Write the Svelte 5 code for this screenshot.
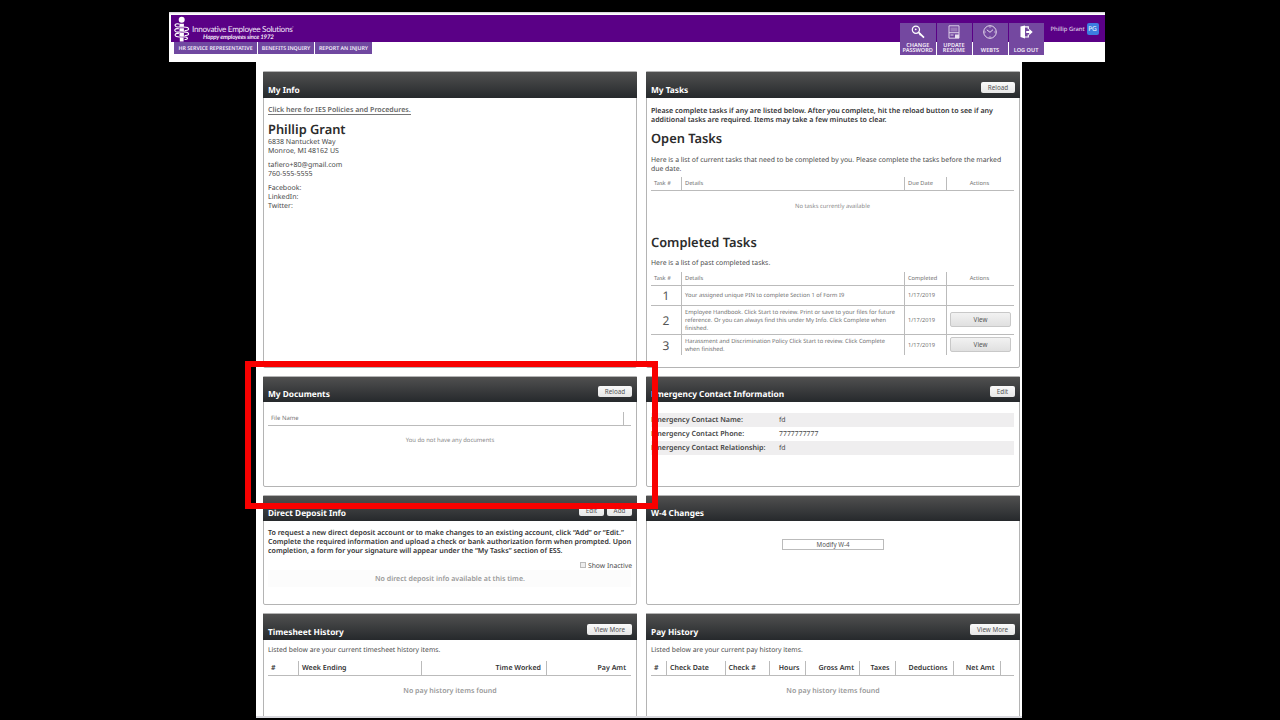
<script>
  const payColumns = ['#', 'Check Date', 'Check #', 'Hours', 'Gross Amt', 'Taxes', 'Deductions', 'Net Amt', ''];
  const nav = ['HR SERVICE REPRESENTATIVE', 'BENEFITS INQUIRY', 'REPORT AN INJURY'];
  const completed = [
    { id: 1, lines: ['Your assigned unique PIN to complete Section 1 of Form I9'], view: false },
    { id: 2, lines: ['Employee Handbook. Click Start to review. Print or save to your files for future', 'reference. Or you can always find this under My Info. Click Complete when', 'finished.'], view: true },
    { id: 3, lines: ['Harassment and Discrimination Policy Click Start to review. Click Complete', 'when finished.'], view: true }
  ];
  const contact = [
    ['Emergency Contact Name:', 'fd'],
    ['Emergency Contact Phone:', '7777777777'],
    ['Emergency Contact Relationship:', 'fd']
  ];
</script>

<div class="screen">
  <header>
    <div class="bar">
      <svg class="logo" viewBox="0 0 18 26" width="18" height="26" fill="none" stroke="#fff">
        <circle cx="8.700" cy="3.700" r="3" fill="#fff" stroke="none" />
        <path d="M6.500 7.700h4.400v3H6.500zM6.500 12.300h4.400v3H6.500zM6.500 17h4.400v3H6.500zM6.800 21.500h3.800v4H6.800z" fill="#fff" stroke="none" />
        <path d="M6 8C2.500 7 .8 9.300 3 10.500C6 12 11 10 14.500 11.500C17 13 15 14.800 12 14.500M5.500 12.800C2 12 .5 14.500 3 15.700C6.500 17 11 14.800 14.500 16.500C17 18 15 19.800 12 19.500M5.500 17.500C2 17 1 19.500 3.500 20.500C6.500 21.800 10 19.800 13.500 21.300C15.500 22.500 14 23.800 12 23.500" stroke-width="1.100" stroke-linecap="round" />
      </svg>
      <div class="brand">
        <div class="name">Innovative Employee Solutions<sup>’</sup></div>
        <div class="motto">Happy employees since 1972</div>
      </div>
      <div class="tiles">
        <div class="tile">
          <svg viewBox="0 0 14 14" width="14" height="14" fill="none" stroke="#fff"><circle cx="4.900" cy="4.700" r="3.600" stroke-width="1.200" /><circle cx="4.700" cy="4.300" r=".9" fill="#fff" stroke="none" /><path d="M7.600 7.400L13 12.600M8.500 10l1.600-1.400" stroke-width="1.700" /></svg>
          <span>CHANGE<br />PASSWORD</span>
        </div>
        <div class="tile">
          <svg viewBox="0 0 14 14" width="14" height="14" fill="none" stroke="#ddd0e8"><path d="M2 .8h10v12.400H2z" stroke-width="1" /><path d="M3.500 2.500h7v4h-7z" fill="#9a78b8" stroke="none" /><path d="M2 7.700h10M3.500 10h3" stroke-width="1" /><path d="M8 9.500h4v3.500H8z" fill="#e9dff0" stroke="none" /></svg>
          <span>UPDATE<br />RESUME</span>
        </div>
        <div class="tile">
          <svg viewBox="0 0 14 14" width="14" height="14" fill="none" stroke="#e6dced"><circle cx="7" cy="7" r="6.300" stroke-width="1" /><path d="M3.800 4.800L7 7.300l3-2.600" stroke-width="1" /><path d="M7 1.300v1.500M7 11.200v1.500M1.300 7h1.500M11.200 7h1.500" stroke-width=".8" /></svg>
          <span>WEBTS</span>
        </div>
        <div class="tile">
          <svg viewBox="0 0 14 14" width="14" height="14" fill="none" stroke="#fff"><path d="M1.500 1.500L6 .5v13L1.500 12z" fill="#fff" stroke="none" /><path d="M6 1.800h3.300v2.500M6 12h3.300V9.500" stroke-width="1.200" /><path d="M7.200 5.900h3V3.700L13.700 7l-3.500 3.300V8.100h-3z" fill="#fff" stroke="none" /></svg>
          <span>LOG OUT</span>
        </div>
      </div>
      <div class="user">Phillip Grant</div>
      <div class="avatar">PG</div>
    </div>
    <nav>{#each nav as item, i}<div class="n{i}"><span>{item}</span></div>{/each}</nav>
  </header>

  <main>
    <section class="edge">
      <div class="head"><h2>My Info</h2></div>
      <div class="body info">
        <p class="link"><span>Click here for IES Policies and Procedures.</span></p>
        <h3 class="person">Phillip Grant</h3>
        <p class="t">6838 Nantucket Way<br />Monroe, MI 48162 US</p>
        <p class="t gap">tafiero+80@gmail.com<br />760-555-5555</p>
        <p class="t gap">Facebook:<br />LinkedIn:<br />Twitter:</p>
      </div>
    </section>

    <section class="edge">
      <div class="head"><h2>My Tasks</h2><button>Reload</button></div>
      <div class="body">
        <p class="b top">Please complete tasks if any are listed below. After you complete, hit the reload button to see if any<br />additional tasks are required. Items may take a few minutes to clear.</p>
        <h3 class="open">Open Tasks</h3>
        <p class="t long">Here is a list of current tasks that need to be completed by you. Please complete the tasks before the marked<br />due date.</p>
        <div class="tasks first">
          <div class="row th"><div>Task #</div><div>Details</div><div>Due Date</div><div class="act">Actions</div></div>
        </div>
        <p class="none tasknone">No tasks currently available</p>
        <h3 class="done">Completed Tasks</h3>
        <p class="t long">Here is a list of past completed tasks.</p>
        <div class="tasks second">
          <div class="row th"><div>Task #</div><div>Details</div><div>Completed</div><div class="act">Actions</div></div>
          {#each completed as task}
            <div class="row r{task.id}">
              <div class="num">{task.id}</div>
              <div class="det"><span>{#each task.lines as line, i}{#if i}<br />{/if}{line}{/each}</span></div>
              <div>1/17/2019</div>
              <div class="act">{#if task.view}<button class="view">View</button>{/if}</div>
            </div>
          {/each}
        </div>
      </div>
    </section>

    <section>
      <div class="head"><h2>My Documents</h2><button>Reload</button></div>
      <div class="body">
        <div class="files"><div>File Name</div><div></div></div>
        <p class="none docnone">You do not have any documents</p>
      </div>
    </section>

    <section>
      <div class="head"><h2>Emergency Contact Information</h2><button class="small">Edit</button></div>
      <div class="body contact">
        {#each contact as [label, value]}<div class="pair"><b>{label}</b><span>{value}</span></div>{/each}
      </div>
    </section>

    <section>
      <div class="head"><h2>Direct Deposit Info</h2><button class="small">Edit</button><button class="small">Add</button></div>
      <div class="body">
        <p class="b deposit">To request a new direct deposit account or to make changes to an existing account, click “Add” or “Edit.”<br />Complete the required information and upload a check or bank authorization form when prompted. Upon<br />completion, a form for your signature will appear under the “My Tasks” section of ESS.</p>
        <div class="inactive"><i></i><span>Show Inactive</span></div>
        <p class="missing nodeposit">No direct deposit info available at this time.</p>
      </div>
    </section>

    <section>
      <div class="head"><h2>W-4 Changes</h2></div>
      <div class="body"><button class="modify">Modify W-4</button></div>
    </section>

    <section class="last edge">
      <div class="head"><h2>Timesheet History</h2><button class="more">View More</button></div>
      <div class="body hist">
        <p class="t listed">Listed below are your current timesheet history items.</p>
        <div class="times"><div>#</div><div>Week Ending</div><div class="r">Time Worked</div><div class="r">Pay Amt</div></div>
        <p class="missing">No pay history items found</p>
      </div>
    </section>

    <section class="last edge">
      <div class="head"><h2>Pay History</h2><button class="more">View More</button></div>
      <div class="body hist">
        <p class="t listed">Listed below are your current pay history items.</p>
        <div class="pays">{#each payColumns as col, i}<div class:r={i > 2}>{col}</div>{/each}</div>
        <p class="missing">No pay history items found</p>
      </div>
    </section>
  </main>
  <div class="highlight"></div>
</div>

<style>
  :global(body) { margin: 0; background: #000; }
  .screen { position: relative; width: 1280px; height: 720px; overflow: hidden; background: #000; font-family: "Noto Sans", sans-serif; font-size: 6.800px; line-height: 9px; color: #4a4a4a; text-rendering: geometricPrecision; white-space: nowrap; }
  .screen * { box-sizing: border-box; }
  p, h2, h3 { margin: 0; }
  header { display: flow-root; margin: 0 0 0 169px; width: 936px; height: 62px; padding-top: 12px; background: linear-gradient(#000 12px, #cfcbd2 12px, #fff 14px); }
  .bar { height: 27px; margin: 3px 0 0 2px; display: flex; background: #5a0086; color: #fff; }
  .logo { margin: 1px 0 0 2px; flex: none; }
  .brand { width: 130px; margin-left: 1px; }
  .name { margin-top: 10px; font: 8.200px/9px Lato, sans-serif; letter-spacing: -.33px; color: #efe5f6; }
  .name sup { font-size: 5px; line-height: 0; vertical-align: 2px; }
  .motto { margin: 0 0 0 11px; font: italic 700 6.200px/7px Lato, sans-serif; letter-spacing: -.2px; color: #efe4f5; }
  .tiles { margin: 8px 0 0 578px; display: grid; grid-template-columns: 35.500px 35px 35px 35px; gap: 1px; height: 31.500px; }
  .tile { background: #7448a0; display: flex; flex-direction: column; align-items: center; font: 600 5.600px/5.500px "Noto Sans"; color: #f4edf8; text-align: center; }
  .tile svg { margin-top: 2px; flex: none; }
  .tile span { margin-top: auto; padding-bottom: 1px; }
  .user { margin: 9.500px 0 0 7px; width: 36px; font-size: 5.900px; color: #eee3f4; }
  .avatar { margin-top: 8px; width: 12px; height: 12px; border-radius: 2px; background: #3c7de0; font-size: 6.500px; line-height: 12px; text-align: center; }
  nav { display: flex; gap: 1px; margin-left: 5px; height: 12px; }
  nav div { height: 12px; background: #7048a0; color: #f5effa; font: 600 5.300px/12.500px "Noto Sans"; text-align: center; }
  .n0 { width: 83px; } .n1 { width: 56px; } .n2 { width: 57px; }

  main { margin-left: 256px; width: 766px; height: 656px; padding: 9px 2px 0 7px; display: grid; grid-template-columns: 374px 374px; grid-template-rows: 296.500px 111px 110.500px 103px; column-gap: 9px; row-gap: 8px; background: #fff; border-bottom: 2px solid #d9d9de; }
  section { border: 1px solid #b4b4b4; border-radius: 0 0 2px 2px; background: #fff; min-width: 0; }
  section.last { border-bottom: 0; border-radius: 0; }
  .head { height: 25px; margin: 0 -1px; padding: 0 5px; background: linear-gradient(#505050, #26292c); display: flex; gap: 3px; align-items: flex-start; }
  .edge .head { height: 26px; }
  h2 { flex: 1; font-size: 8.300px; line-height: 12px; padding-top: 12px; color: #fff; }
  .edge h2 { padding-top: 13px; }
  button { font: 6.300px/9px "Noto Sans"; color: #555; background: linear-gradient(#fafafa, #e6e6e6); border: 0; border-radius: 2px; padding: 0; width: 34px; height: 11px; margin-top: 9.500px; }
  .edge button { margin-top: 10px; }
  button.small { width: 25px; }
  button.more { width: 45px; }
  .body { padding: 8px 5px 0 4px; }
  .link { font-size: 7.060px; font-weight: 600; color: #666; height: 14.500px; }
  .link span { border-bottom: 1px solid #777; display: inline-block; height: 9px; line-height: 9.600px; }
  .info { font-size: 7px; }
  .person + .t { padding-top: 1px; }
  h3 { color: #2c2c2c; font-weight: 600; font-size: 12.850px; line-height: 16px; }
  .gap { margin-top: 5px; }
  .b { font-weight: 600; font-size: 7.070px; color: #333; }
  .b.top { padding-top: 1px; }
  .deposit { font-size: 7.060px; padding-top: .8px; }
  .open { margin-top: 5px; }
  .long { font-size: 6.870px; }
  .open + .t { margin-top: 10px; }
  .tasks { color: #707070; font-size: 5.700px; }
  .first { margin-top: 3px; }
  .row { display: grid; grid-template-columns: 30px 223px 42px 68px; border-bottom: 1px solid #bbb; width: 363px; }
  .row > div { padding-left: 3px; border-left: 1px solid #bbb; display: flex; align-items: center; }
  .row > div:first-child { border: 0; }
  .row > .act { justify-content: center; padding: 0 2px 0 0; }
  .th { height: 14px; }
  .none { text-align: center; color: #888; font-size: 5.800px; }
  .tasknone { margin-top: 11px; }
  .done { margin-top: 23px; }
  .done + .t { margin-top: 9px; }
  .second { margin-top: 4px; }
  .r1 { height: 20px; } .r2 { height: 29px; } .r3 { height: 20px; border: 0; }
  .row > .num { font-size: 12px; justify-content: center; color: #555; padding: 0; }
  .row > .det { line-height: 8.300px; font-size: 5.780px; }
  .edge .act .view { margin: -1px 0 0 2px; width: 61px; height: 15px; border: 1px solid #c8c8c8; background: linear-gradient(#f2f2f2, #e0e0e0); }
  .files { margin-top: 2px; height: 14px; display: flex; border-bottom: 1px solid #bbb; color: #777; font-size: 5.900px; line-height: 13px; }
  .files div:first-child { width: 355.500px; padding-left: 3px; border-right: 1px solid #bbb; }
  .docnone { margin-top: 10px; padding-left: 1px; font-size: 5.880px; }
  .body.contact { padding-top: 11px; }
  .pair { height: 14.200px; line-height: 14.600px; display: flex; align-items: baseline; font-size: 6.900px; }
  .pair:nth-child(odd) { background: #efeeef; }
  .pair b { width: 128px; font-weight: 600; font-size: 7.120px; color: #444; line-height: 15.400px; }
  .inactive { display: flex; justify-content: flex-end; align-items: center; margin: 4px -1px 0 0; gap: 1.500px; height: 10px; }
  .inactive i { width: 6px; height: 6px; border: 1px solid #bbb; background: #eee; }
  .missing { font-weight: 600; font-size: 7.060px; color: #999; text-align: center; padding-left: 1px; }
  .nodeposit { height: 17px; line-height: 18px; background: #fcfcfc; }
  .modify { display: block; width: 102px; height: 11px; margin: 10px auto 0 131px; background: #fff; border: 1px solid #bbb; border-radius: 0; font-size: 6.200px; }
  .body.hist { padding-top: 5px; }
  .times, .pays { display: grid; margin-top: 7px; height: 15px; border-bottom: 1px solid #bbb; line-height: 15px; font-weight: 600; color: #333; font-size: 7.060px; }
  .times { grid-template-columns: 30px 122.500px 125.500px 1fr; }
  .pays { grid-template-columns: 15px 58.500px 44px 36px 54.500px 35.500px 58px 47px 1fr; }
  .times > div, .pays > div { padding: 0 5px 0 3px; border-left: 1px solid #bbb; height: 14px; }
  .times > div:first-child, .pays > div:first-child { border: 0; }
  .r { text-align: right; }
  .hist .missing { margin-top: 11px; }
  .highlight { position: absolute; left: 245px; top: 361px; width: 413px; height: 148px; border: 6px solid #f80000; }
</style>
